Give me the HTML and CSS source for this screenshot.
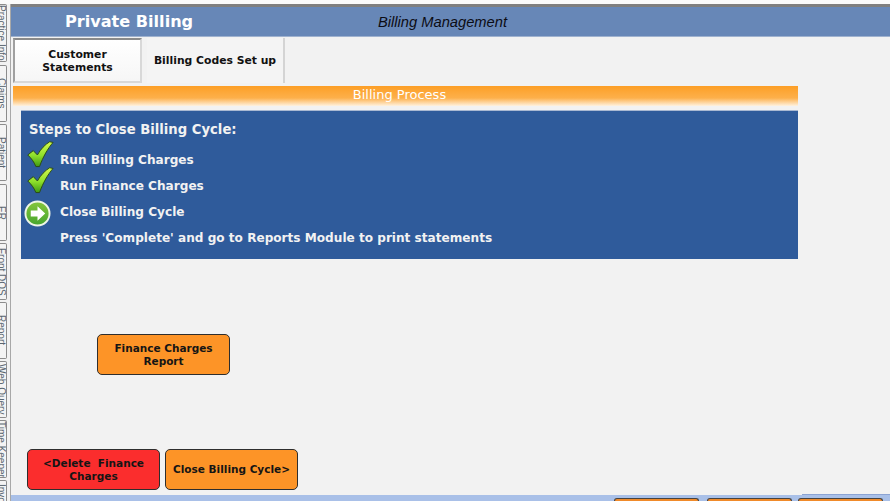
FILE: index.html
```html
<!DOCTYPE html>
<html lang="en">
<head>
<meta charset="UTF-8" />
<title>Private Billing</title>
<link rel="stylesheet" href="styles.css">
</head>
<body>
<div class="topstrip"></div>
<div class="app">
  <!-- side tabs, cut off by the window edge -->
  <nav class="rail">
    <div class="rail-tab t1"><span>Practice Info</span></div>
    <div class="rail-tab t2"><span>Claims</span></div>
    <div class="rail-tab t3"><span>Patient</span></div>
    <div class="rail-tab t4"><span>ER</span></div>
    <div class="rail-tab t5"><span>Front DOS</span></div>
    <div class="rail-tab t6"><span>Report</span></div>
    <div class="rail-tab t7"><span>Web Query</span></div>
    <div class="rail-tab t8"><span>Time Keeper</span></div>
    <div class="rail-tab t9"><span>Invoice</span></div>
  </nav>

  <div class="content">
    <header class="titlebar">
      <div class="app-title">Private Billing</div>
      <div class="app-sub">Billing Management</div>
    </header>

    <div class="tabs">
      <button class="tab active">Customer<br>Statements</button>
      <button class="tab">Billing Codes Set up</button>
    </div>

    <main class="panel">
      <div class="process-bar">Billing Process</div>

      <section class="steps">
        <h2>Steps to Close Billing Cycle:</h2>
        <div class="step">
          <svg class="ico check" viewBox="0 0 28 28"><defs><linearGradient id="g1" x1="0" y1="0" x2="0" y2="1"><stop offset="0" stop-color="#d6f94e"/><stop offset="0.55" stop-color="#8fe02c"/><stop offset="1" stop-color="#3f9a12"/></linearGradient></defs><path d="M0.8 14.5 L6.5 10 L10.8 14.5 C14 8.5 19 3.5 23.5 0.8 L27 1.5 C21.5 8 16.8 16 13 26.5 L9.2 26.5 C7.2 21.5 4.5 18 0.8 14.5Z" fill="url(#g1)" stroke="#2a4a12" stroke-width="1"/></svg>
          <span>Run Billing Charges</span>
        </div>
        <div class="step">
          <svg class="ico check" viewBox="0 0 28 28"><path d="M0.8 14.5 L6.5 10 L10.8 14.5 C14 8.5 19 3.5 23.5 0.8 L27 1.5 C21.5 8 16.8 16 13 26.5 L9.2 26.5 C7.2 21.5 4.5 18 0.8 14.5Z" fill="url(#g1)" stroke="#2a4a12" stroke-width="1"/></svg>
          <span>Run Finance Charges</span>
        </div>
        <div class="step">
          <svg class="ico go" viewBox="0 0 28 28"><defs><linearGradient id="g2" x1="0" y1="0" x2="0" y2="1"><stop offset="0" stop-color="#86c63c"/><stop offset="1" stop-color="#45a52e"/></linearGradient></defs><circle cx="14" cy="14" r="12.5" fill="url(#g2)" stroke="#eef5e6" stroke-width="2"/><path d="M7 11H14V6.5L22 14L14 21.5V17H7Z" fill="#fff"/></svg>
          <span>Close Billing Cycle</span>
        </div>
        <div class="step">
          <span class="ico"></span>
          <span>Press 'Complete' and go to Reports Module to print statements</span>
        </div>
      </section>

      <div class="report-row">
        <button class="btn orange">Finance Charges<br>Report</button>
      </div>

      <div class="action-row">
        <button class="btn red">&lt;Delete&nbsp; Finance<br>Charges</button>
        <button class="btn orange">Close Billing Cycle&gt;</button>
      </div>
    </main>

    <footer class="bottombar">
      <div class="stub s1"></div>
      <div class="stub s2"></div>
      <div class="stub s3"></div>
    </footer>
  </div>
</div>
</body>
</html>
```

FILE: styles.css
```css
html, body {
  margin: 0;
  padding: 0;
  height: 501px;
  overflow: hidden;
}
body {
  font-family: "DejaVu Sans", Verdana, sans-serif;
  background: #f2f2f2;
}
.topstrip {
  height: 4px;
  background: #fafafa;
}
.app {
  display: flex;
  height: 497px;
}

/* side tabs */
.rail {
  width: 10px;
  flex: none;
  background: #f2f2f2;
  border-right: 1px solid #a8a8a8;
  overflow: hidden;
}
.rail-tab {
  width: 7px;
  box-sizing: border-box;
  margin-bottom: 2px;
  background: #f4f4f4;
  border: 1px solid #8c8c8c;
  border-left: none;
  border-radius: 0 2px 2px 0;
  overflow: hidden;
  display: flex;
  justify-content: flex-end;
  align-items: center;
}
.rail-tab span {
  writing-mode: vertical-rl;
  font-family: "Liberation Sans", Arial, sans-serif;
  font-size: 10px;
  color: #5a6670;
  white-space: nowrap;
  margin-right: -1px;
}
.t1 { height: 58px; margin-bottom: 3px; }
.t2 { height: 57px; }
.t3 { height: 57px; margin-bottom: 3px; }
.t4 { height: 57px; }
.t5 { height: 57px; }
.t6 { height: 57px; }
.t7 { height: 57px; }
.t8 { height: 58px; }
.t9 { height: 40px; }

.content {
  flex: 1;
  min-width: 0;
  display: flex;
  flex-direction: column;
}

/* title */
.titlebar {
  height: 29px;
  flex: none;
  display: flex;
  align-items: center;
  background: #6787b7;
  border-top: 3px solid #7f7f7f;
  border-bottom: 1px solid #9fb2cf;
}
.app-title {
  margin-left: 54px;
  width: 313px;
  color: #fff;
  font-size: 16.1px;
  font-weight: bold;
}
.app-sub {
  font-family: "Liberation Sans", Arial, sans-serif;
  font-style: italic;
  font-size: 14.7px;
  color: #0c0c14;
}

/* tabs */
.tabs {
  display: flex;
  height: 49px;
  flex: none;
  padding: 1px 0 0 2px;
  box-sizing: border-box;
}
.tab {
  width: 133px;
  height: 45px;
  margin-right: 1px;
  padding: 0;
  border: none;
  border-right: 2px solid #d4d4d4;
  background: #f4f4f4;
  font-family: inherit;
  font-size: 10.8px;
  font-weight: bold;
  line-height: 13px;
  color: #111;
}
.tab + .tab {
  width: 138px;
}
.tab.active {
  width: 129px;
  margin-right: 5px;
  border: 2px solid #d8d8d8;
  border-top-color: #8a8a8a;
  border-left-color: #a0a0a0;
  background: linear-gradient(#fff, #f6f6f6);
}

/* main panel */
.panel {
  flex: 1;
  min-height: 0;
  padding-left: 2px;
}
.process-bar {
  width: 785px;
  height: 20px;
  padding-right: 12px;
  box-sizing: border-box;
  background: linear-gradient(#fd9f26, #fdb04b 60%, #fff2df);
  color: #fff;
  font-size: 13px;
  line-height: 17px;
  text-align: center;
}
.steps {
  width: 777px;
  height: 149px;
  margin: 4px 0 0 8px;
  padding: 11px 0 0 8px;
  box-sizing: border-box;
  background: #2f5b9b;
  border-top: 1px solid #aab9d2;
  color: #f2f2f2;
}
.steps h2 {
  margin: 0 0 9px;
  font-size: 13.2px;
  line-height: 16px;
  font-weight: bold;
}
.step {
  display: flex;
  align-items: center;
  height: 26px;
  font-size: 12.1px;
  font-weight: bold;
}
.ico {
  width: 27px;
  height: 27px;
  flex: none;
  margin: 0 4px 0 -2px;
}
.ico.check {
  margin-bottom: 12px;
}
.ico.go {
  margin: 2px 7px 0 -5px;
}
.step .ico + span {
  margin-left: 2px;
}

/* buttons */
.btn {
  width: 133px;
  height: 41px;
  padding: 0;
  box-sizing: border-box;
  border: 1px solid #2e2e2e;
  border-radius: 5px;
  font-family: inherit;
  font-size: 10.5px;
  font-weight: bold;
  line-height: 13px;
  color: #151515;
}
.orange { background: #fd9427; }
.red { background: #fb2d2d; }
.report-row {
  margin: 75px 0 0 84px;
}
.action-row {
  display: flex;
  gap: 5px;
  margin: 74px 0 0 14px;
}

/* bottom */
.bottombar {
  height: 6px;
  flex: none;
  display: flex;
  align-items: flex-start;
  background: #a9c0e8;
  position: relative;
}
/* thin line over the last button */
.bottombar::after {
  content: "";
  position: absolute;
  top: -1px;
  right: 0;
  width: 88px;
  height: 1px;
  background: #8ba3d3;
}
.stub {
  height: 3px;
  margin-top: 3px;
  background: #f08a2a;
  border: 1px solid #444;
  border-bottom: none;
  border-radius: 5px 5px 0 0;
  box-sizing: border-box;
}
.s1 { width: 85px; margin-left: 603px; }
.s2 { width: 85px; margin-left: 8px; }
.s3 { width: 85px; margin-left: 6px; }
```
